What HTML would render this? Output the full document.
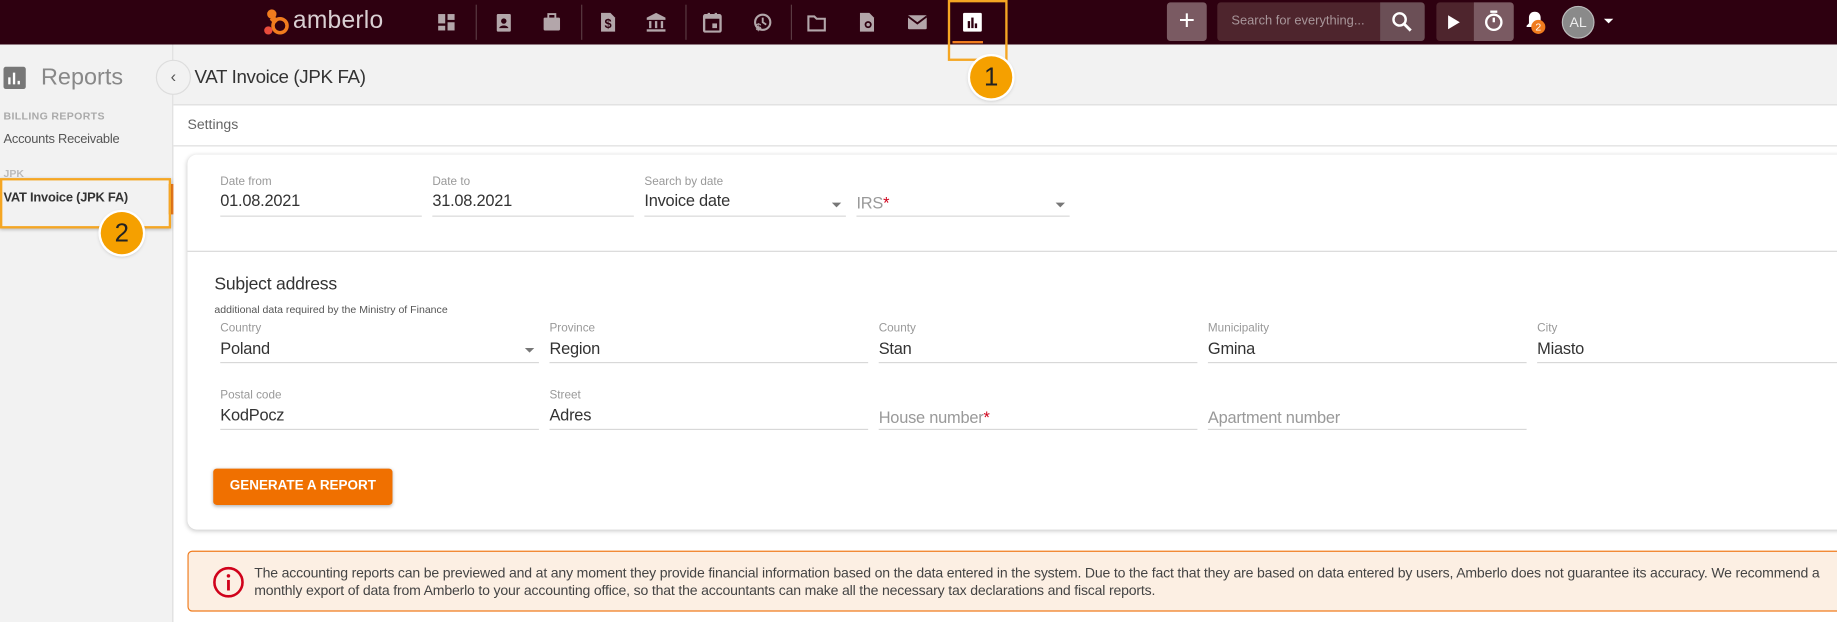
<!DOCTYPE html>
<html><head><meta charset="utf-8">
<style>
html,body{margin:0;padding:0;width:1837px;height:622px;overflow:hidden;background:#fff;font-family:"Liberation Sans",sans-serif}
#w{position:absolute;left:0;top:0;width:1568px;height:531px;transform:scale(1.1716);transform-origin:0 0;background:#fff}
.a{position:absolute}
.top{left:0;top:0;width:1568px;height:38px;background:#2e0010}
.ic{position:absolute;top:10px;width:18px;height:18px}
.sep{position:absolute;top:4px;width:1px;height:30px;background:#5a3a42}
.lab{position:absolute;font-size:10px;color:#999}
.val{position:absolute;font-size:14px;color:#333;letter-spacing:-.2px}
.ln{position:absolute;height:1px;background:#d8d8d8}
.ph{position:absolute;font-size:14px;color:#999;letter-spacing:-.2px}
.car{position:absolute;width:0;height:0;border-left:4px solid transparent;border-right:4px solid transparent;border-top:4px solid #777}
</style></head><body><div id="w">
<div class="a top"></div>
<svg class="a" style="left:224px;top:7px" width="24" height="24" viewBox="0 0 24 24"><circle cx="8" cy="5" r="4" fill="#f07c1e"/><circle cx="15" cy="15" r="6" fill="none" stroke="#f07c1e" stroke-width="3"/><circle cx="5" cy="19" r="3.5" fill="#e94b3c"/><path d="M8 8 L12 12" stroke="#f07c1e" stroke-width="5"/></svg>
<div class="a" style="left:250px;top:6px;font-size:21px;color:#d9cfd2;letter-spacing:.2px">amberlo</div>
<svg class="ic" style="left:372px" viewBox="0 0 18 18" fill="#b3a6aa"><rect x="2" y="2" width="6" height="8"/><rect x="10" y="2" width="6" height="5"/><rect x="2" y="12" width="6" height="4"/><rect x="10" y="9" width="6" height="7"/></svg>
<div class="sep" style="left:406px"></div>
<svg class="ic" style="left:421px" viewBox="0 0 18 18" fill="#b3a6aa"><rect x="3" y="2" width="12" height="15" rx="1"/><circle cx="9" cy="8" r="2.3" fill="#2e0010"/><path d="M5 14c1-3 7-3 8 0z" fill="#2e0010"/></svg>
<svg class="ic" style="left:462px" viewBox="0 0 18 18" fill="#b3a6aa"><rect x="2" y="5" width="14" height="11" rx="1"/><rect x="6" y="2" width="6" height="4" fill="none" stroke="#b3a6aa" stroke-width="1.6"/></svg>
<div class="sep" style="left:496px"></div>
<svg class="ic" style="left:510px" viewBox="0 0 18 18"><path d="M3 1h8l4 4v12H3z" fill="#b3a6aa"/><text x="9" y="14" font-size="11" text-anchor="middle" fill="#2e0010" font-family="Liberation Sans" font-weight="bold">$</text></svg>
<svg class="ic" style="left:551px" viewBox="0 0 18 18" fill="#b3a6aa"><path d="M9 1l8 4v2H1V5z"/><rect x="3" y="8" width="2" height="6"/><rect x="8" y="8" width="2" height="6"/><rect x="13" y="8" width="2" height="6"/><rect x="1" y="15" width="16" height="2"/></svg>
<div class="sep" style="left:585px"></div>
<svg class="ic" style="left:599px" viewBox="0 0 18 18"><rect x="2" y="3" width="14" height="14" rx="1" fill="none" stroke="#b3a6aa" stroke-width="2"/><rect x="2" y="3" width="14" height="3" fill="#b3a6aa"/><rect x="5" y="1" width="2" height="3" fill="#b3a6aa"/><rect x="11" y="1" width="2" height="3" fill="#b3a6aa"/><rect x="9" y="10" width="4" height="4" fill="#b3a6aa"/></svg>
<svg class="ic" style="left:641px" viewBox="0 0 18 18"><circle cx="10" cy="9" r="6.5" fill="none" stroke="#b3a6aa" stroke-width="1.8"/><path d="M10 5v4l3 2" stroke="#b3a6aa" stroke-width="1.6" fill="none"/><text x="4" y="16" font-size="9" fill="#b3a6aa" font-family="Liberation Sans" font-weight="bold">$</text></svg>
<div class="sep" style="left:675px"></div>
<svg class="ic" style="left:688px" viewBox="0 0 18 18"><path d="M2 4h5l2 2h7v10H2z" fill="none" stroke="#b3a6aa" stroke-width="1.8"/></svg>
<svg class="ic" style="left:731px" viewBox="0 0 18 18"><path d="M3 1h8l4 4v12H3z" fill="#b3a6aa"/><circle cx="10" cy="11" r="3" fill="#2e0010"/><circle cx="10" cy="11" r="1.5" fill="#b3a6aa"/></svg>
<svg class="ic" style="left:774px" viewBox="0 0 18 18"><rect x="1" y="3" width="16" height="12" rx="1" fill="#b3a6aa"/><path d="M1 4l8 6 8-6" stroke="#2e0010" stroke-width="1.6" fill="none"/></svg>
<svg class="ic" style="left:821px" viewBox="0 0 18 18"><rect x="1" y="1" width="16" height="16" rx="1" fill="#fff"/><rect x="5" y="8" width="2" height="6" fill="#2e0010"/><rect x="8" y="5" width="2" height="9" fill="#2e0010"/><rect x="11" y="10" width="2" height="4" fill="#2e0010"/></svg>
<div class="a" style="left:813px;top:35px;width:26px;height:2px;background:#f07c1e"></div>
<div class="a" style="left:996px;top:2px;width:34px;height:33px;background:#7a5a62;border-radius:3px;color:#fff;font-size:24px;text-align:center;line-height:32px">+</div>
<div class="a" style="left:1039px;top:2px;width:177px;height:33px;background:#4e252d;border-radius:3px"></div>
<div class="a" style="left:1051px;top:12px;font-size:11px;color:#a8969a">Search for everything...</div>
<div class="a" style="left:1178px;top:2px;width:38px;height:33px;background:#6b4f56;border-radius:0 3px 3px 0"></div>
<svg class="a" style="left:1187px;top:9px" width="19" height="19" viewBox="0 0 20 20"><circle cx="8" cy="8" r="5.5" fill="none" stroke="#fff" stroke-width="2.2"/><path d="M12 12l6 6" stroke="#fff" stroke-width="2.6"/></svg>
<div class="a" style="left:1226px;top:2px;width:66px;height:33px;background:#4e252d;border-radius:3px"></div>
<div class="a" style="left:1258px;top:2px;width:34px;height:33px;background:#7a5a62;border-radius:0 3px 3px 0"></div>
<svg class="a" style="left:1235px;top:12px" width="12" height="14" viewBox="0 0 12 14"><path d="M1 1l10 6-10 6z" fill="#fff"/></svg>
<svg class="a" style="left:1265px;top:8px" width="20" height="20" viewBox="0 0 20 20"><circle cx="10" cy="11" r="6.5" fill="none" stroke="#fff" stroke-width="2"/><path d="M10 11V7M7 2h6" stroke="#fff" stroke-width="2"/></svg>
<svg class="a" style="left:1302px;top:9px" width="16" height="18" viewBox="0 0 16 18"><path d="M8 1c-3 0-5 2-5 5v5l-2 2v1h14v-1l-2-2V6c0-3-2-5-5-5zM6 15h4a2 2 0 0 1-4 0z" fill="#fff"/></svg>
<div class="a" style="left:1307px;top:17px;width:12px;height:12px;border-radius:50%;background:#f07c1e;color:#fff;font-size:9px;text-align:center;line-height:12px">2</div>
<div class="a" style="left:1333px;top:5px;width:28px;height:28px;border-radius:50%;background:#8a8a8a;border:1px solid #bbb;box-sizing:border-box;color:#eee;font-size:12px;text-align:center;line-height:26px">AL</div>
<div class="a" style="left:1369px;top:16px;border-left:4px solid transparent;border-right:4px solid transparent;border-top:4px solid #fff"></div>
<!-- sidebar -->
<div class="a" style="left:0;top:38px;width:148px;height:493px;background:#f2f2f2;border-right:1px solid #ddd;box-sizing:border-box"></div>
<div class="a" style="left:3px;top:57px;width:19px;height:19px;background:#777;border-radius:2px"></div>
<div class="a" style="left:7px;top:66px;width:2px;height:6px;background:#fff"></div><div class="a" style="left:11px;top:62px;width:2px;height:10px;background:#fff"></div><div class="a" style="left:15px;top:69px;width:2px;height:3px;background:#fff"></div>
<div class="a" style="left:35px;top:55px;font-size:20px;color:#888">Reports</div>
<div class="a" style="left:3px;top:94px;font-size:9px;font-weight:bold;color:#aaa;letter-spacing:.3px">BILLING REPORTS</div>
<div class="a" style="left:3px;top:113px;font-size:11px;color:#555;letter-spacing:-.2px">Accounts Receivable</div>
<div class="a" style="left:3px;top:143px;font-size:9px;font-weight:bold;color:#bbb">JPK</div>
<div class="a" style="left:3px;top:163px;font-size:11px;font-weight:bold;color:#333;letter-spacing:-.2px">VAT Invoice (JPK FA)</div>
<div class="a" style="left:144px;top:157px;width:4px;height:26px;background:#f07c1e"></div>
<!-- main header -->
<div class="a" style="left:148px;top:38px;width:1420px;height:51px;background:#f2f2f2;border-bottom:1px solid #ddd"></div>
<div class="a" style="left:133px;top:51px;width:30px;height:30px;border-radius:50%;background:#f2f2f2;border:1px solid #ddd;box-sizing:border-box;color:#555;font-size:14px;text-align:center;line-height:27px">‹</div>
<div class="a" style="left:166px;top:58px;font-size:16px;color:#333;letter-spacing:-.3px">VAT Invoice (JPK FA)</div>
<div class="a" style="left:148px;top:90px;width:1420px;height:34px;background:#fff;border-bottom:1px solid #ddd"></div>
<div class="a" style="left:160px;top:99px;font-size:12px;color:#666">Settings</div>
<!-- card -->
<div class="a" style="left:160px;top:132px;width:1440px;height:320px;background:#fff;border-radius:8px;box-shadow:0 1px 4px rgba(0,0,0,.22)"></div>
<div class="ln" style="left:160px;top:214px;width:1410px"></div>
<div class="lab" style="left:188px;top:150px">Date from</div><div class="val" style="left:188px;top:163px">01.08.2021</div><div class="ln" style="left:188px;top:184px;width:172px"></div>
<div class="lab" style="left:369px;top:150px">Date to</div><div class="val" style="left:369px;top:163px">31.08.2021</div><div class="ln" style="left:369px;top:184px;width:172px"></div>
<div class="lab" style="left:550px;top:150px">Search by date</div><div class="val" style="left:550px;top:163px">Invoice date</div><div class="ln" style="left:550px;top:184px;width:172px"></div><div class="car" style="left:710px;top:173px"></div>
<div class="ph" style="left:731px;top:165px">IRS<span style="color:#d0021b">*</span></div><div class="ln" style="left:731px;top:184px;width:182px"></div><div class="car" style="left:901px;top:173px"></div>
<div class="a" style="left:183px;top:234px;font-size:15px;color:#333;letter-spacing:-.2px">Subject address</div>
<div class="a" style="left:183px;top:259px;font-size:9px;color:#555">additional data required by the Ministry of Finance</div>
<div class="lab" style="left:188px;top:275px">Country</div><div class="val" style="left:188px;top:289px">Poland</div><div class="ln" style="left:188px;top:309px;width:272px"></div><div class="car" style="left:448px;top:297px"></div>
<div class="lab" style="left:469px;top:275px">Province</div><div class="val" style="left:469px;top:289px">Region</div><div class="ln" style="left:469px;top:309px;width:272px"></div>
<div class="lab" style="left:750px;top:275px">County</div><div class="val" style="left:750px;top:289px">Stan</div><div class="ln" style="left:750px;top:309px;width:272px"></div>
<div class="lab" style="left:1031px;top:275px">Municipality</div><div class="val" style="left:1031px;top:289px">Gmina</div><div class="ln" style="left:1031px;top:309px;width:272px"></div>
<div class="lab" style="left:1312px;top:275px">City</div><div class="val" style="left:1312px;top:289px">Miasto</div><div class="ln" style="left:1312px;top:309px;width:260px"></div>
<div class="lab" style="left:188px;top:332px">Postal code</div><div class="val" style="left:188px;top:346px">KodPocz</div><div class="ln" style="left:188px;top:366px;width:272px"></div>
<div class="lab" style="left:469px;top:332px">Street</div><div class="val" style="left:469px;top:346px">Adres</div><div class="ln" style="left:469px;top:366px;width:272px"></div>
<div class="ph" style="left:750px;top:348px">House number<span style="color:#d0021b">*</span></div><div class="ln" style="left:750px;top:366px;width:272px"></div>
<div class="ph" style="left:1031px;top:348px">Apartment number</div><div class="ln" style="left:1031px;top:366px;width:272px"></div>
<div class="a" style="left:182px;top:400px;width:153px;height:31px;background:#f07000;border-radius:3px;box-shadow:0 1px 3px rgba(0,0,0,.3);color:#fff;font-size:11.5px;font-weight:bold;text-align:center;line-height:31px">GENERATE A REPORT</div>
<!-- alert -->
<div class="a" style="left:160px;top:470px;width:1440px;height:52px;background:#fcefe3;border:1px solid #f07c1e;border-radius:4px;box-sizing:border-box"></div>
<svg class="a" style="left:181px;top:483px" width="28" height="28" viewBox="0 0 28 28"><circle cx="14" cy="14" r="12" fill="none" stroke="#d0021b" stroke-width="2.2"/><rect x="12.8" y="12" width="2.4" height="9" fill="#d0021b"/><circle cx="14" cy="8.5" r="1.5" fill="#d0021b"/></svg>
<div class="a" style="left:217px;top:482px;font-size:12px;color:#444;line-height:15px;white-space:nowrap;letter-spacing:-.15px">The accounting reports can be previewed and at any moment they provide financial information based on the data entered in the system. Due to the fact that they are based on data entered by users, Amberlo does not guarantee its accuracy. We recommend a<br>monthly export of data from Amberlo to your accounting office, so that the accountants can make all the necessary tax declarations and fiscal reports.</div>
<!-- highlights on top -->
<div class="a" style="left:809px;top:0;width:51px;height:52px;border:2px solid #f5a623;box-sizing:border-box;z-index:5"></div>
<div class="a" style="left:828px;top:48px;width:36px;height:36px;border-radius:50%;background:#f5a000;box-shadow:0 0 0 2px #fff,0 1px 4px rgba(0,0,0,.4);color:#222;font-size:22px;text-align:center;line-height:36px;z-index:6">1</div>
<div class="a" style="left:0;top:152px;width:146px;height:43px;border:2px solid #f5a623;box-sizing:border-box;box-shadow:0 1px 3px rgba(0,0,0,.3);z-index:5"></div>
<div class="a" style="left:86px;top:181px;width:36px;height:36px;border-radius:50%;background:#f5a000;box-shadow:0 0 0 2px #fff,0 1px 4px rgba(0,0,0,.4);color:#222;font-size:22px;text-align:center;line-height:36px;z-index:6">2</div>
</div></body></html>
